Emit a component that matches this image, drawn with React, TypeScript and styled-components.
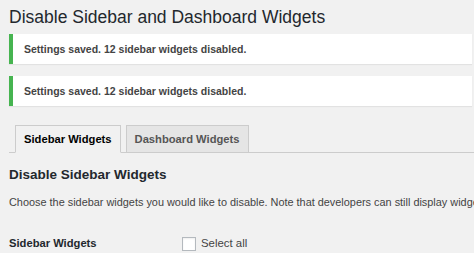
import React from "react";
import styled, { createGlobalStyle } from "styled-components";

const Global = createGlobalStyle`
  html, body {
    margin: 0;
    padding: 0;
    background: #f1f1f1;
    font-family: "Liberation Sans", Arial, Helvetica, sans-serif;
    color: #444;
    overflow: hidden;
  }
  * { box-sizing: border-box; }
`;

const Wrap = styled.div`
  padding: 5px 2px 0 9px;
  width: 474px;
  height: 253px;
`;

const Title = styled.h1`
  margin: 0 0 5px 0;
  font-size: 17.5px;
  line-height: 24px;
  font-weight: 400;
  color: #23282d;
  white-space: nowrap;
`;

const Notice = styled.div`
  display: flex;
  align-items: center;
  height: 30px;
  margin-bottom: 12px;
  padding: 0 11px;
  background: #fff;
  border-left: 4px solid #46b450;
  box-shadow: 0 1px 1px rgba(0, 0, 0, 0.06);
`;

const NoticeText = styled.p`
  margin: 0;
  font-size: 10.5px;
  font-weight: 700;
  color: #444;
  white-space: nowrap;
`;

const TabBar = styled.nav`
  display: flex;
  gap: 5px;
  margin: 19px -2px 0 0;
  padding-left: 6px;
  border-bottom: 1px solid #ccc;
`;

const Tab = styled.div<{ $active?: boolean }>`
  height: 28px;
  margin-bottom: -1px;
  padding: 0 8px;
  border: 1px solid #ccc;
  border-bottom-color: ${(p) => (p.$active ? "#f1f1f1" : "#ccc")};
  background: ${(p) => (p.$active ? "#f1f1f1" : "#e5e5e5")};
  color: ${(p) => (p.$active ? "#000" : "#555")};
  font-size: 11.2px;
  font-weight: 700;
  line-height: 26px;
  white-space: nowrap;
`;

const SectionTitle = styled.h2`
  margin: 13px 0 0 0;
  font-size: 13.5px;
  line-height: 18px;
  font-weight: 700;
  color: #23282d;
`;

const Description = styled.p`
  margin: 9.5px 0 0 0;
  font-size: 10.9px;
  line-height: 16px;
  color: #444;
  white-space: nowrap;
`;

const FieldRow = styled.div`
  display: grid;
  grid-template-columns: 173px 1fr;
  margin-top: 26.5px;
`;

const FieldLabel = styled.div`
  font-size: 11.2px;
  font-weight: 700;
  line-height: 14px;
  color: #23282d;
`;

const CheckLabel = styled.label`
  display: flex;
  align-items: flex-start;
  gap: 5px;
  font-size: 11.4px;
  line-height: 14px;
  color: #444;
`;

const Box = styled.span`
  display: inline-block;
  width: 14px;
  height: 14px;
  margin-top: 1px;
  background: #fff;
  border: 1px solid #b4b9be;
  box-shadow: inset 0 1px 2px rgba(0, 0, 0, 0.07);
`;

export default function App() {
  return (
    <>
      <Global />
      <Wrap>
        <Title>Disable Sidebar and Dashboard Widgets</Title>
        <Notice>
          <NoticeText>Settings saved. 12 sidebar widgets disabled.</NoticeText>
        </Notice>
        <Notice>
          <NoticeText>Settings saved. 12 sidebar widgets disabled.</NoticeText>
        </Notice>
        <TabBar>
          <Tab $active>Sidebar Widgets</Tab>
          <Tab>Dashboard Widgets</Tab>
        </TabBar>
        <SectionTitle>Disable Sidebar Widgets</SectionTitle>
        <Description>
          Choose the sidebar widgets you would like to disable. Note that developers can still display widgets
        </Description>
        <FieldRow>
          <FieldLabel>Sidebar Widgets</FieldLabel>
          <CheckLabel>
            <Box />
            Select all
          </CheckLabel>
        </FieldRow>
      </Wrap>
    </>
  );
}
